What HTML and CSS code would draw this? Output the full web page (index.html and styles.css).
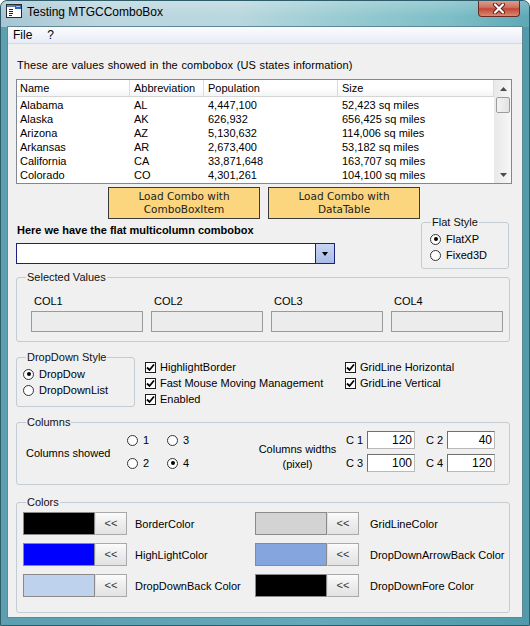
FILE: index.html
```html
<!DOCTYPE html>
<html lang="en">
<head>
  <meta charset="UTF-8">
  <title>Testing MTGCComboBox</title>
  <link rel="stylesheet" href="styles.css">
</head>
<body>
<div class="window">
  <div class="titlebar">
    <svg class="appicon" width="16" height="16" viewBox="0 0 16 16">
      <rect x="0.5" y="1.5" width="15" height="13" fill="#fff" stroke="#2b2b2b"/>
      <rect x="1" y="2" width="14" height="2" fill="#5a7fb8"/>
      <rect x="9" y="2" width="6" height="4" fill="#2f63c4"/>
      <rect x="10" y="3" width="4" height="1" fill="#9cc0f0"/>
      <rect x="3" y="6" width="4" height="1" fill="#222"/>
      <rect x="3" y="8" width="4" height="1" fill="#222"/>
      <rect x="3" y="10" width="4" height="1" fill="#222"/>
      <rect x="3" y="12" width="3" height="1" fill="#222"/>
    </svg>
    <span class="title">Testing MTGCComboBox</span>
    <div class="close">
      <svg width="14" height="11" viewBox="0 0 14 11">
        <path d="M3 1.5 L11 9.5 M11 1.5 L3 9.5" stroke="#5a1d1a" stroke-width="4" stroke-linecap="round"/>
        <path d="M3 1.5 L11 9.5 M11 1.5 L3 9.5" stroke="#fff" stroke-width="2.2" stroke-linecap="round"/>
      </svg>
    </div>
  </div>

  <div class="client">
    <div class="menubar">
      <span>File</span>
      <span>?</span>
    </div>

    <div class="content">
      <p class="intro">These are values showed in the combobox (US states information)</p>

      <div class="listview">
        <div class="lv-main">
          <div class="lv-head">
            <div>Name</div><div>Abbreviation</div><div>Population</div><div>Size</div>
          </div>
          <div class="lv-row"><div>Alabama</div><div>AL</div><div>4,447,100</div><div>52,423 sq miles</div></div>
          <div class="lv-row"><div>Alaska</div><div>AK</div><div>626,932</div><div>656,425 sq miles</div></div>
          <div class="lv-row"><div>Arizona</div><div>AZ</div><div>5,130,632</div><div>114,006 sq miles</div></div>
          <div class="lv-row"><div>Arkansas</div><div>AR</div><div>2,673,400</div><div>53,182 sq miles</div></div>
          <div class="lv-row"><div>California</div><div>CA</div><div>33,871,648</div><div>163,707 sq miles</div></div>
          <div class="lv-row"><div>Colorado</div><div>CO</div><div>4,301,261</div><div>104,100 sq miles</div></div>
        </div>
        <div class="vscroll">
          <div class="sb-btn">
            <svg width="7" height="4" viewBox="0 0 7 4"><path d="M0 4 L3.5 0 L7 4Z" fill="#4a4a4a"/></svg>
          </div>
          <div class="sb-thumb"></div>
          <div class="sb-track"></div>
          <div class="sb-btn">
            <svg width="7" height="4" viewBox="0 0 7 4"><path d="M0 0 L3.5 4 L7 0Z" fill="#4a4a4a"/></svg>
          </div>
        </div>
      </div>

      <div class="toprow">
        <div class="leftcol">
          <div class="loadbtns">
            <div class="loadbtn">Load Combo with<br>ComboBoxItem</div>
            <div class="loadbtn">Load Combo with<br>DataTable</div>
          </div>
          <div class="flatlabel">Here we have the flat multicolumn combobox</div>
          <div class="combo">
            <div class="combo-arrow"><span class="tri"></span></div>
          </div>
        </div>
        <fieldset class="flatstyle">
          <legend>Flat Style</legend>
          <div class="gbody">
            <div class="opt"><span class="radio on"></span>FlatXP</div>
            <div class="opt"><span class="radio"></span>Fixed3D</div>
          </div>
        </fieldset>
      </div>

      <fieldset class="selected">
        <legend>Selected Values</legend>
        <div class="gbody">
          <div class="selcol"><div class="sellabel">COL1</div><div class="selbox"></div></div>
          <div class="selcol"><div class="sellabel">COL2</div><div class="selbox"></div></div>
          <div class="selcol"><div class="sellabel">COL3</div><div class="selbox"></div></div>
          <div class="selcol"><div class="sellabel">COL4</div><div class="selbox"></div></div>
        </div>
      </fieldset>

      <div class="optrow">
        <fieldset class="ddstyle">
          <legend>DropDown Style</legend>
          <div class="gbody">
            <div class="opt"><span class="radio on"></span>DropDow</div>
            <div class="opt"><span class="radio"></span>DropDownList</div>
          </div>
        </fieldset>
        <div class="checks">
          <div class="opt"><span class="check"><svg width="9" height="9" viewBox="0 0 9 9"><path d="M1 4.5 L3.5 7 L8 1.5" fill="none" stroke="#000" stroke-width="1.8"/></svg></span>HighlightBorder</div>
          <div class="opt"><span class="check"><svg width="9" height="9" viewBox="0 0 9 9"><path d="M1 4.5 L3.5 7 L8 1.5" fill="none" stroke="#000" stroke-width="1.8"/></svg></span>Fast Mouse Moving Management</div>
          <div class="opt"><span class="check"><svg width="9" height="9" viewBox="0 0 9 9"><path d="M1 4.5 L3.5 7 L8 1.5" fill="none" stroke="#000" stroke-width="1.8"/></svg></span>Enabled</div>
        </div>
        <div class="checks">
          <div class="opt"><span class="check"><svg width="9" height="9" viewBox="0 0 9 9"><path d="M1 4.5 L3.5 7 L8 1.5" fill="none" stroke="#000" stroke-width="1.8"/></svg></span>GridLine Horizontal</div>
          <div class="opt"><span class="check"><svg width="9" height="9" viewBox="0 0 9 9"><path d="M1 4.5 L3.5 7 L8 1.5" fill="none" stroke="#000" stroke-width="1.8"/></svg></span>GridLine Vertical</div>
        </div>
      </div>

      <fieldset class="columns">
        <legend>Columns</legend>
        <div class="gbody">
          <div class="colshowed">Columns showed</div>
          <div class="colradios">
            <div class="opt"><span class="radio"></span>1</div>
            <div class="opt"><span class="radio"></span>3</div>
            <div class="opt"><span class="radio"></span>2</div>
            <div class="opt"><span class="radio on"></span>4</div>
          </div>
          <div class="colwidths">Columns widths<br>(pixel)</div>
          <div class="widthgrid">
            <div class="wfield"><span>C 1</span><div class="num">120</div></div>
            <div class="wfield"><span>C 2</span><div class="num">40</div></div>
            <div class="wfield"><span>C 3</span><div class="num">100</div></div>
            <div class="wfield"><span>C 4</span><div class="num">120</div></div>
          </div>
        </div>
      </fieldset>

      <fieldset class="colors">
        <legend>Colors</legend>
        <div class="gbody">
          <div class="citem"><div class="swatch" style="background:#000000"></div><div class="pick">&lt;&lt;</div><span>BorderColor</span></div>
          <div class="citem"><div class="swatch" style="background:#d3d3d3"></div><div class="pick">&lt;&lt;</div><span class="lbl-right">GridLineColor</span></div>
          <div class="citem"><div class="swatch" style="background:#0000ff"></div><div class="pick">&lt;&lt;</div><span>HighLightColor</span></div>
          <div class="citem"><div class="swatch" style="background:#85a5de"></div><div class="pick">&lt;&lt;</div><span class="lbl-right">DropDownArrowBack Color</span></div>
          <div class="citem"><div class="swatch" style="background:#bed2ee"></div><div class="pick">&lt;&lt;</div><span>DropDownBack Color</span></div>
          <div class="citem"><div class="swatch" style="background:#000000"></div><div class="pick">&lt;&lt;</div><span class="lbl-right">DropDownFore Color</span></div>
        </div>
      </fieldset>
    </div>
  </div>
</div>
</body>
</html>
```

FILE: styles.css
```css
body {
  margin: 0;
  font-family: "Liberation Sans", Arial, sans-serif;
  font-size: 11px;
  color: #000;
  background: #fff;
}

.window {
  width: 530px;
  height: 626px;
  box-sizing: border-box;
  border: 1px solid #2e5c6a;
  border-radius: 7px 7px 0 0;
  background: linear-gradient(90deg, #5b9fb0, #64a9b7 60%, #4f9aab);
  display: flex;
  flex-direction: column;
  overflow: hidden;
}

/* title bar */
.titlebar {
  height: 26px;
  display: flex;
  align-items: flex-start;
  background:
    linear-gradient(rgba(255, 255, 255, 0.22), rgba(255, 255, 255, 0) 60%),
    linear-gradient(90deg, #a6c6d3 0%, #bcd6df 18%, #b8d7de 45%, #98cbd1 65%, #7dbec7 85%, #5ea9b6 100%);
}

.appicon {
  margin: 2px 0 0 5px;
}

.title {
  margin: 4px 0 0 5px;
  line-height: 15px;
  font-size: 12px;
  color: #000;
}

.close {
  margin: -1px 9px 0 auto;
  width: 42px;
  height: 17px;
  box-sizing: border-box;
  border: 1px solid #6b2b25;
  border-top: 0;
  border-radius: 0 0 4px 4px;
  background: linear-gradient(#dfa394, #cf7262 45%, #c34634 55%, #d98b74);
  display: flex;
  align-items: center;
  justify-content: center;
}

/* client area */
.client {
  flex: 1;
  margin: 0 7px 8px;
  background: #f0f0f0;
  box-shadow: 0 0 0 1px #5f8796;
}

.menubar {
  height: 16px;
  line-height: 16px;
  padding-left: 5px;
  display: flex;
  gap: 15px;
  border-bottom: 1px solid #d5dae6;
  background: linear-gradient(#fbfcfe, #e8ecf6);
  font-size: 12px;
}

.content {
  padding: 0 12px 0 8px;
}

.intro {
  margin: 14px 0 0;
  padding-left: 1px;
  line-height: 14px;
  word-spacing: 0.5px;
  letter-spacing: 0.1px;
}

/* list view */
.listview {
  margin-top: 7px;
  width: 496px;
  height: 105px;
  box-sizing: border-box;
  border: 1px solid #828790;
  background: #fff;
  display: flex;
}

.lv-main {
  width: 477px;
}

.lv-head,
.lv-row {
  display: grid;
  grid-template-columns: 113px 74px 134px 156px;
}

.lv-head {
  height: 17px;
  box-sizing: border-box;
  border-bottom: 1px solid #d5d5d5;
  background: linear-gradient(#ffffff, #ffffff 50%, #f3f4f6);
  margin-bottom: 1px;
}

.lv-head div {
  line-height: 16px;
  padding-left: 4px;
  border-right: 1px solid #dcdcdc;
}

.lv-row div {
  line-height: 14px;
  padding-left: 4px;
  white-space: nowrap;
}

.lv-head div:first-child,
.lv-row div:first-child {
  padding-left: 3px;
}

.vscroll {
  width: 17px;
  display: flex;
  flex-direction: column;
  background: linear-gradient(90deg, #e9e9e9, #f6f6f6);
  border-left: 1px solid #eaeaea;
}

.sb-btn {
  height: 17px;
  display: flex;
  align-items: center;
  justify-content: center;
}

.sb-thumb {
  height: 16px;
  margin: 0 1px;
  box-sizing: border-box;
  border: 1px solid #9c9c9c;
  border-radius: 2px;
  background: linear-gradient(90deg, #f3f3f3, #e2e2e2);
}

.sb-track {
  flex: 1;
}

/* load buttons + combo */
.toprow {
  display: flex;
  margin-top: 3px;
}

.leftcol {
  width: 405px;
}

.loadbtns {
  display: flex;
  gap: 8px;
  margin-left: 92px;
}

.loadbtn {
  width: 152px;
  height: 32px;
  box-sizing: border-box;
  border: 1px solid #3b3b3b;
  background: #fcd67e;
  color: #222;
  line-height: 13px;
  font-family: "DejaVu Sans", sans-serif;
  font-size: 10.5px;
  text-align: center;
  display: flex;
  align-items: center;
  justify-content: center;
}

.flatlabel {
  margin-top: 5px;
  padding-left: 1px;
  line-height: 13px;
  font-weight: bold;
}

.combo {
  margin-top: 6px;
  width: 319px;
  height: 21px;
  box-sizing: border-box;
  border: 1px solid #1f1f7c;
  background: #fff;
  display: flex;
  justify-content: flex-end;
}

.combo-arrow {
  width: 18px;
  border-left: 1px solid #1f1f7c;
  background: linear-gradient(#c8d5f3, #a9bbe8);
  display: flex;
  align-items: center;
  justify-content: center;
}

.tri {
  width: 0;
  height: 0;
  border-left: 3.5px solid transparent;
  border-right: 3.5px solid transparent;
  border-top: 4px solid #000;
}

/* group boxes */
fieldset {
  margin: 0;
  padding: 0;
  min-width: 0;
  border: 1px solid #c5ccd1;
  border-radius: 3px;
}

legend {
  margin-left: 9px;
  padding: 0 1px;
  line-height: 13px;
  color: #111;
}

.opt {
  height: 16px;
  display: flex;
  align-items: center;
  white-space: nowrap;
}

.radio {
  flex-shrink: 0;
  width: 11px;
  height: 11px;
  box-sizing: border-box;
  border: 1px solid #333;
  border-radius: 50%;
  background: #fff;
  margin-right: 5px;
  display: flex;
  align-items: center;
  justify-content: center;
}

.radio.on::after {
  content: "";
  width: 4px;
  height: 4px;
  border-radius: 50%;
  background: #000;
}

.check {
  flex-shrink: 0;
  width: 11px;
  height: 11px;
  box-sizing: border-box;
  border: 1px solid #1c1c1c;
  background: #fff;
  margin-right: 4px;
  display: flex;
  align-items: center;
  justify-content: center;
}

.flatstyle {
  width: 86px;
  margin: 29px 1px 0 auto;
}

.flatstyle .gbody {
  padding: 2px 0 5px 8px;
}

.selected {
  margin-top: 2px;
}

.selected .gbody {
  display: grid;
  grid-template-columns: repeat(4, 112px);
  column-gap: 8px;
  padding: 11px 0 9px 14px;
}

.sellabel {
  padding-left: 3px;
  line-height: 13px;
}

.selbox {
  margin-top: 3px;
  height: 21px;
  box-sizing: border-box;
  border: 1px solid #9a9a9a;
  background: #ececec;
}

.optrow {
  display: flex;
  margin-top: 9px;
}

.ddstyle {
  width: 117px;
  flex-shrink: 0;
}

.ddstyle .gbody {
  padding: 2px 0 7px 6px;
}

.checks {
  flex-shrink: 0;
  width: 200px;
  margin: 8px 0 0 10px;
}

.checks + .checks {
  width: 160px;
  margin-left: 0;
}

.columns {
  margin-top: 9px;
}

.columns .gbody {
  display: flex;
  align-items: flex-start;
  padding: 2px 0 12px 9px;
}

.colshowed {
  width: 101px;
  margin-top: 16px;
  line-height: 13px;
}

.colradios {
  display: grid;
  grid-template-columns: 40px 40px;
  grid-auto-rows: 18px;
  row-gap: 5px;
}

.colradios .opt {
  height: 18px;
}

.colwidths {
  width: 85px;
  margin: 11px 0 0 48px;
  line-height: 15px;
  text-align: center;
}

.widthgrid {
  display: grid;
  grid-template-columns: 69px 69px;
  column-gap: 11px;
  row-gap: 5px;
  margin-left: 6px;
}

.wfield {
  display: flex;
  align-items: center;
  height: 18px;
}

.wfield span {
  width: 21px;
}

.num {
  width: 48px;
  height: 18px;
  box-sizing: border-box;
  border: 1px solid #6f6f6f;
  border-right-color: #b9b9b9;
  border-bottom-color: #b9b9b9;
  background: #fff;
  text-align: right;
  padding-right: 2px;
  line-height: 16px;
  font-size: 12px;
}

.colors {
  margin-top: 11px;
}

.colors .gbody {
  display: grid;
  grid-template-columns: 232px 232px;
  grid-auto-rows: 23px;
  row-gap: 8px;
  padding: 3px 0 15px 6px;
}

.citem {
  display: flex;
  align-items: center;
  min-width: 0;
}

.swatch {
  flex-shrink: 0;
  width: 72px;
  height: 23px;
  box-sizing: border-box;
  border: 1px solid #8a8a8a;
}

.pick {
  flex-shrink: 0;
  width: 32px;
  height: 23px;
  box-sizing: border-box;
  border: 1px solid #a9a9a9;
  border-left-color: #e0e0e0;
  background: linear-gradient(#fbfbfb, #ededed 50%, #e2e2e2);
  color: #333;
  text-align: center;
  line-height: 21px;
}

.citem span {
  margin-left: 8px;
  white-space: nowrap;
}

.citem .lbl-right {
  margin-left: 11px;
}
```
